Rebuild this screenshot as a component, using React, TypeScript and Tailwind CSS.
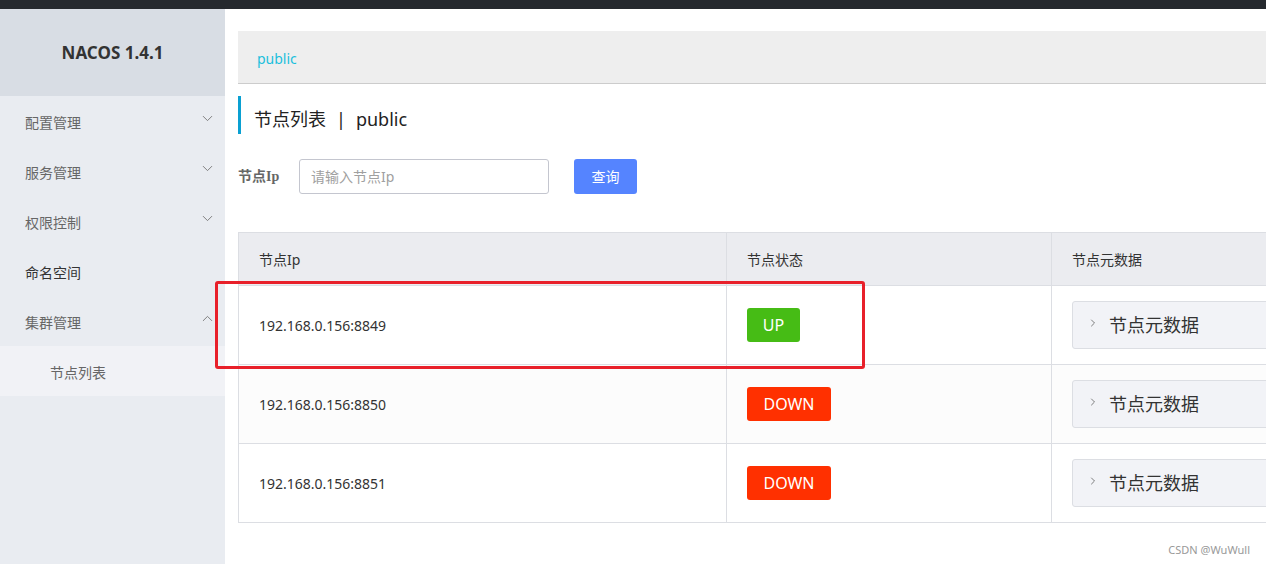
import { ChevronDown, ChevronUp, ChevronRight } from "lucide-react";

const FONT = { fontFamily: '"Noto Sans", "Noto Sans CJK SC", sans-serif' };

const menu = [
  { label: "配置管理", arrow: "down", dark: false },
  { label: "服务管理", arrow: "down", dark: false },
  { label: "权限控制", arrow: "down", dark: false },
  { label: "命名空间", arrow: null, dark: true },
  { label: "集群管理", arrow: "up", dark: false },
];

const nodes = [
  { ip: "192.168.0.156:8849", state: "UP", bg: "bg-white" },
  { ip: "192.168.0.156:8850", state: "DOWN", bg: "bg-[#fcfcfc]" },
  { ip: "192.168.0.156:8851", state: "DOWN", bg: "bg-white" },
];

export default function App() {
  return (
    <div className="relative h-[564px] w-[1266px] overflow-hidden bg-white" style={FONT}>
      <div className="h-[9px] bg-[#25292e]" />
      <div className="flex h-[555px]">
        {/* sidebar */}
        <aside className="flex w-[225px] shrink-0 flex-col bg-[#e9ecf1]">
          <div className="flex h-[87px] items-center justify-center bg-[#d8dde4] text-[17px] font-bold text-[#333]">
            NACOS 1.4.1
          </div>
          {menu.map((m) => (
            <div key={m.label} className="flex h-[50px] items-center justify-between pl-[25px] pr-[9px] pt-[3px]">
              <span className={`text-[14px] ${m.dark ? "text-[#333]" : "text-[#666]"}`}>{m.label}</span>
              {m.arrow === "down" && <ChevronDown size={17} strokeWidth={1.3} className="-mt-[9px] text-[#777]" />}
              {m.arrow === "up" && <ChevronUp size={17} strokeWidth={1.3} className="-mt-[9px] text-[#777]" />}
            </div>
          ))}
          <div className="flex h-[50px] items-center bg-[#f1f2f6] pl-[50px] pt-[3px] text-[14px] text-[#666]">节点列表</div>
        </aside>

        {/* main */}
        <main className="min-w-0 flex-1 pl-[13px] pt-[22px]">
          <div className="flex h-[53px] items-center border-b border-[#cccccc] bg-[#eeeeee] pl-[19px] pt-[2px] text-[14px] text-[#1bbfdc]">
            public
          </div>

          <div className="mt-[12px] flex h-[38px] items-center border-l-[3px] border-[#0aa0d2] pl-[13px] pt-[8px] text-[18px] text-[#222]">
            节点列表 <span className="mx-[10px]">|</span> public
          </div>

          <div className="mt-[25px] flex items-center">
            <span
              className="w-[61px] text-[14px] font-bold text-[#666]"
              style={{ fontFamily: '"Liberation Serif", "Noto Sans CJK SC", serif' }}
            >
              节点Ip
            </span>
            <div className="flex h-[35px] w-[250px] items-center rounded-[3px] border border-[#c4c6cf] px-[11px] text-[14px] text-[#a0a0a0]">
              请输入节点Ip
            </div>
            <button className="ml-[25px] h-[35px] w-[63px] rounded-[3px] bg-[#5584ff] text-[14px] text-white">查询</button>
          </div>

          <div className="mt-[38px] w-[1100px] border border-[#dcdee3]">
            <div className="flex h-[52px] items-center bg-[#ebecf0] text-[14px] text-[#333]">
              <div className="flex h-full w-[488px] items-center border-r border-[#dcdee3] pl-[20px]">节点Ip</div>
              <div className="flex h-full w-[325px] items-center border-r border-[#dcdee3] pl-[20px]">节点状态</div>
              <div className="flex h-full flex-1 items-center pl-[20px]">节点元数据</div>
            </div>
            {nodes.map((n) => (
              <div key={n.ip} className={`flex h-[79px] border-t border-[#dcdee3] text-[14px] text-[#333] ${n.bg}`}>
                <div className="flex h-full w-[488px] items-center border-r border-[#dcdee3] pl-[20px]">{n.ip}</div>
                <div className="flex h-full w-[325px] items-center border-r border-[#dcdee3] pl-[20px]">
                  <span
                    className={`flex h-[34px] items-center justify-center rounded-[3px] text-[16px] text-white ${
                      n.state === "UP" ? "w-[53px] bg-[#46bc15]" : "w-[84px] bg-[#ff3000]"
                    }`}
                  >
                    {n.state}
                  </span>
                </div>
                <div className="flex h-full flex-1 items-center pl-[20px]">
                  <div className="flex h-[48px] flex-1 items-center rounded-[3px] border border-[#dcdee3] bg-[#f2f3f7] pl-[14px] text-[18px] text-[#333]">
                    <ChevronRight size={12} strokeWidth={1.5} className="-mt-[4px] mr-[10px] text-[#555]" />
                    节点元数据
                  </div>
                </div>
              </div>
            ))}
          </div>
        </main>
      </div>

      {/* highlight annotation */}
      <div className="absolute left-[215px] top-[281px] h-[88px] w-[650px] rounded-[3px] border-[3px] border-[#e8202a]" />

      <div className="absolute right-[16px] top-[542px] text-[11px] text-[#999]">CSDN @WuWull</div>
    </div>
  );
}
